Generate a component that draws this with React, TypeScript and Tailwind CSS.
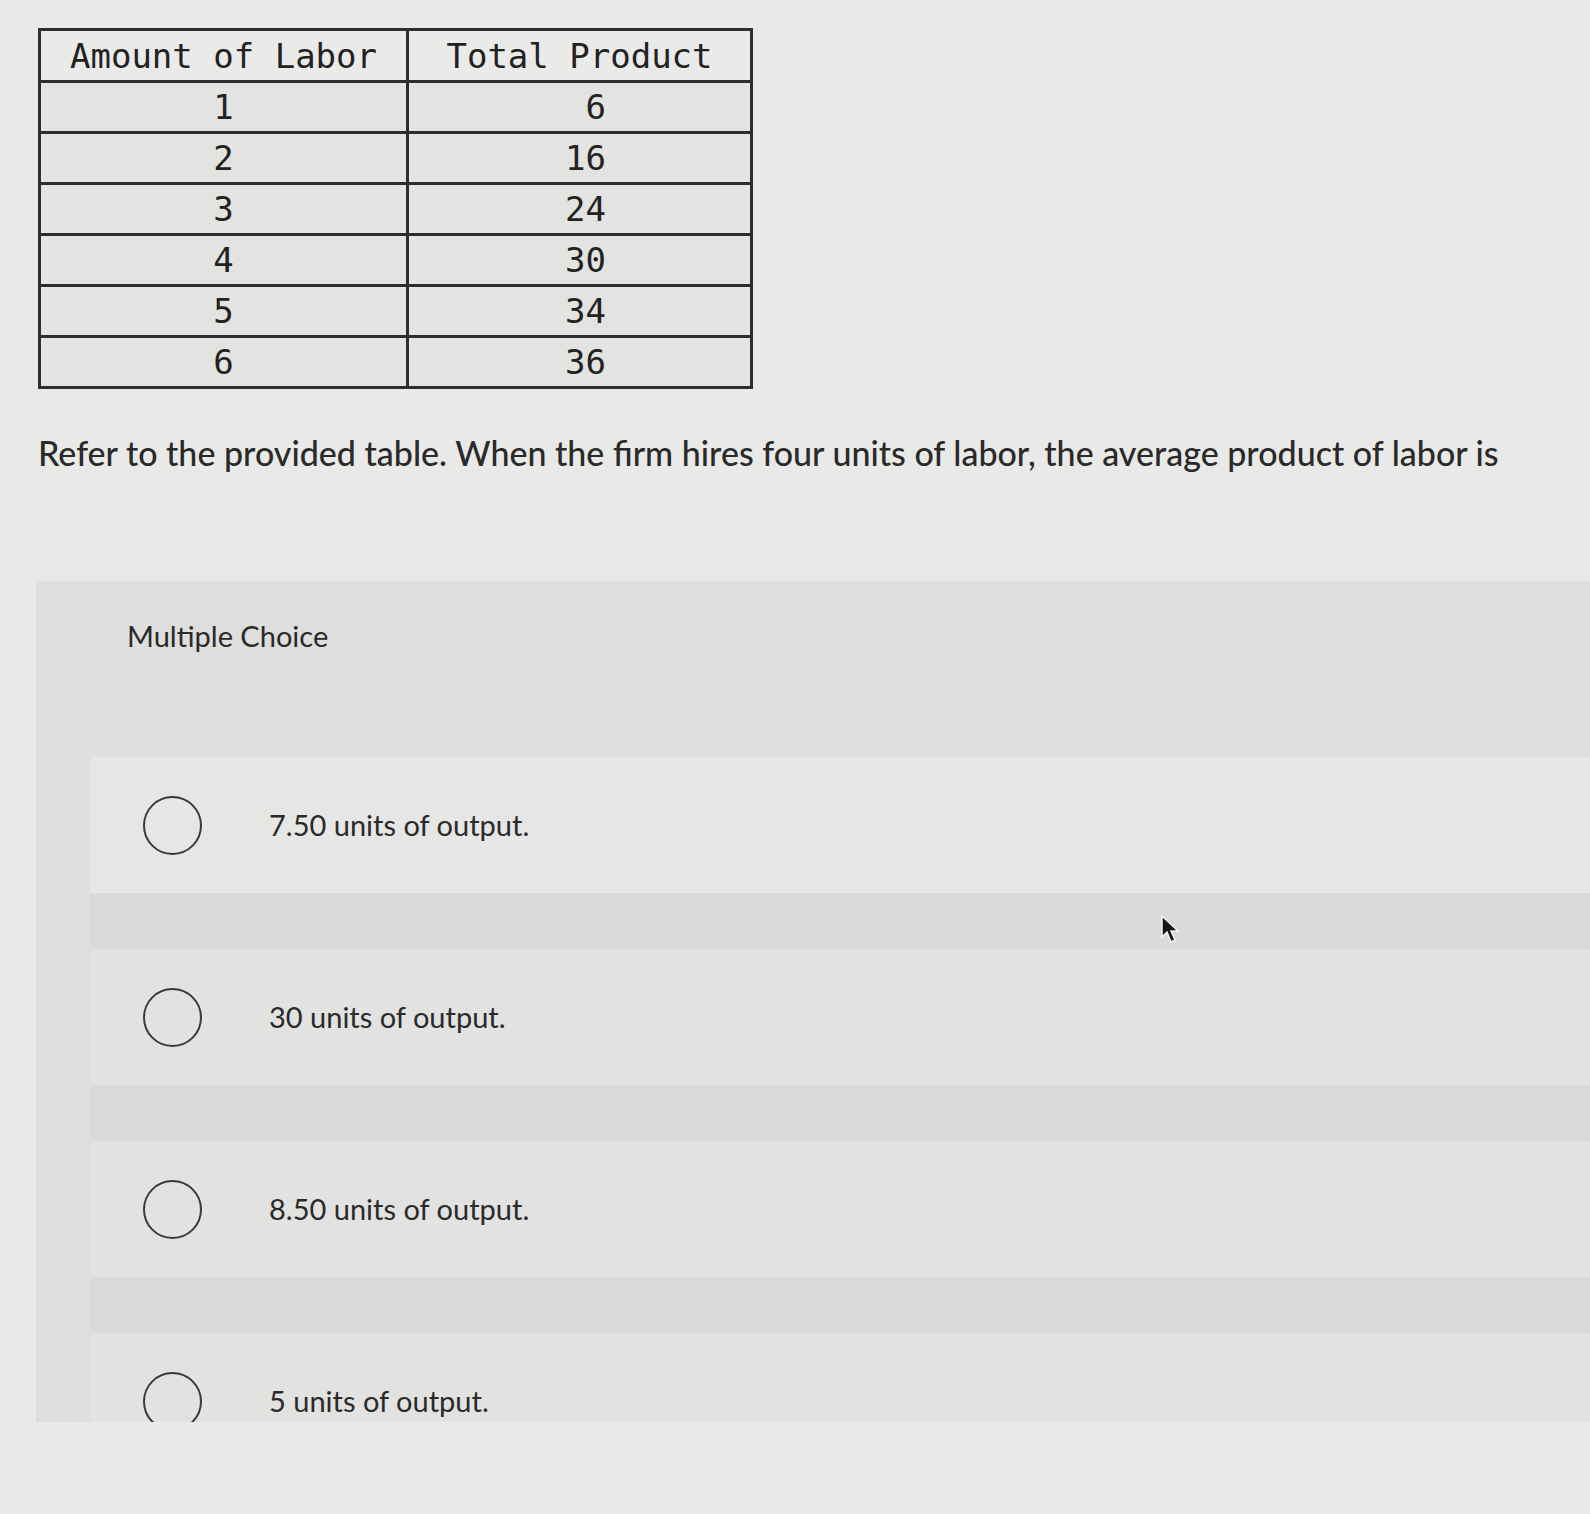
import React from "react";

const rows: [string, string][] = [
  ["1", "6"],
  ["2", "16"],
  ["3", "24"],
  ["4", "30"],
  ["5", "34"],
  ["6", "36"],
];

const options = [
  "7.50 units of output.",
  "30 units of output.",
  "8.50 units of output.",
  "5 units of output.",
];

export default function App() {
  const mono = { fontFamily: '"DejaVu Sans Mono", "Liberation Mono", monospace' };
  const sans = { fontFamily: 'Lato, "Open Sans", "Liberation Sans", sans-serif' };
  return (
    <div className="relative w-[1590px] h-[1514px] overflow-hidden bg-[#e9e9e7] text-[#262626]">
      <div className="pt-[28px] pl-[38px]">
        <table
          className="border-collapse border-[3px] border-[#2e2e2e] text-[34px] leading-none text-[#222]"
          style={mono}
        >
          <thead>
            <tr className="h-[52px] bg-[#eaeae8]">
              <th className="w-[368px] border-[3px] border-[#2e2e2e] font-normal text-center">
                Amount of Labor
              </th>
              <th className="w-[344px] border-[3px] border-[#2e2e2e] font-normal text-center">
                Total Product
              </th>
            </tr>
          </thead>
          <tbody>
            {rows.map(([a, b]) => (
              <tr key={a} className="h-[51px] bg-[#e3e3e1]">
                <td className="border-[3px] border-[#2e2e2e] text-center">{a}</td>
                <td className="border-[3px] border-[#2e2e2e] text-right pr-[144px]">{b}</td>
              </tr>
            ))}
          </tbody>
        </table>
      </div>

      <p
        className="mt-[44px] pl-[38px] text-[34px] leading-[40px] text-[#2a2a2a] font-medium"
        style={sans}
      >
        Refer to the provided table. When the firm hires four units of labor, the average product of labor is
      </p>

      <div
        className="mt-[108px] ml-[36px] h-[841px] overflow-hidden bg-[#dededc]"
        style={sans}
      >
        <div className="pl-[91px] pt-[36px] h-[176px] text-[29px] leading-[38px] text-[#2a2a2a]">
          Multiple Choice
        </div>
        <div className="ml-[54px] flex flex-col">
          {options.map((o, i) => (
            <div key={o} className="flex flex-col">
              <div
                className={
                  i === 0
                    ? "h-[136px] flex items-center bg-[#e6e6e4]"
                    : "h-[136px] flex items-center bg-[#e2e2e0]"
                }
              >
                <div className="ml-[53px] w-[59px] h-[59px] rounded-full border-[2px] border-[#3a3a3a] shrink-0" />
                <div className="ml-[67px] text-[29px] leading-[34px] text-[#2a2a2a]">{o}</div>
              </div>
              {i < options.length - 1 && <div className="h-[56px] bg-[#dadad8]" />}
            </div>
          ))}
        </div>
      </div>

      <svg
        className="absolute left-[1160px] top-[915px]"
        width="22"
        height="30"
        viewBox="0 0 22 30"
      >
        <path
          d="M2 1 L2 22 L7 17 L11 27 L15 25 L11 16 L18 16 Z"
          fill="#1a1414"
          stroke="#f4f4f4"
          strokeWidth="1.5"
        />
      </svg>
    </div>
  );
}
